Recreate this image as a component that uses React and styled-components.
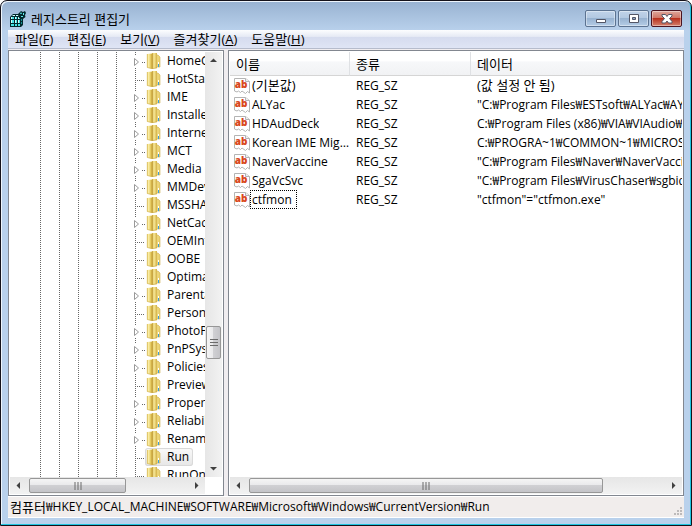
import React from "react";
import styled, { createGlobalStyle } from "styled-components";

const GlobalStyle = createGlobalStyle`
  * {
    box-sizing: border-box;
  }
  body {
    margin: 0;
    font-family: "Open Sans", "Noto Sans CJK KR", sans-serif;
    font-size: 12px;
    line-height: 18px;
    color: #000;
  }
`;

const Window = styled.div`
  height: 100vh;
  min-height: 240px;
  display: flex;
  flex-direction: column;
  padding: 0 7px;
  padding-bottom: 7px;
  border: 1px solid #15121a;
  border-radius: 7px 7px 0 0;
  background: linear-gradient(#98b2d1, #b9d1ec 30px);
  box-shadow: inset -1px -1px #1fc5e0, inset 1px 1px #eef5fc;
  overflow: hidden;
`;
const TitleBar = styled.header`
  flex: none;
  height: 29px;
  display: flex;
  align-items: flex-start;
  padding: 0 2px 0 1px;
`;
const TitleIcon = styled.svg`
  flex: none;
  width: 18px;
  height: 18px;
  margin-top: 9px;
`;
const Title = styled.h1`
  flex: 1;
  margin: 9px 0 0 4px;
  font-size: 13px;
  font-weight: 400;
  line-height: 18px;
`;
const WindowButtons = styled.div`
  display: flex;
  gap: 2px;
  margin-top: 9px;
`;
const WindowButton = styled.button`
  width: 31px;
  height: 17px;
  display: flex;
  align-items: center;
  justify-content: center;
  padding: 0;
  border: 1px solid ${(p) => (p.$danger ? "#4b1420" : "#5c7391")};
  border-radius: 2px;
  background: ${(p) =>
    p.$danger
      ? "linear-gradient(#dea79c, #cf7464 48%, #b8311e 50%, #d4806c)"
      : "linear-gradient(#c0d3e9, #b2c8e1 48%, #98b3d1 50%, #b4cce6)"};
  box-shadow: inset 0 0 0 1px rgba(255, 255, 255, 0.4);
`;

const MenuBar = styled.nav`
  flex: none;
  height: 19px;
  display: flex;
  gap: 14px;
  padding-left: 7px;
  background: linear-gradient(#fcfdfe, #e6eaf5 36%, #d5dbee 38%, #dfe5f5);
  border-bottom: 1px solid #b6bccc;
`;
const MenuItem = styled.button`
  padding: 0;
  border: 0;
  background: none;
  font: inherit;
  font-size: 13px;
  line-height: 19px;
  color: inherit;
`;

const Panes = styled.main`
  flex: 1;
  min-height: 0;
  display: grid;
  grid-template-columns: 216px minmax(0, 1fr);
  gap: 4px;
  padding-top: 1px;
  background: #f0edf0;
`;
const Pane = styled.section`
  min-width: 0;
  min-height: 0;
  display: flex;
  flex-direction: column;
  padding: 1px;
  border: 1px solid #828790;
  background: #fff;
`;
const PaneBody = styled.div`
  flex: 1;
  min-height: 0;
  display: flex;
  overflow: hidden;
`;

const Tree = styled.ul`
  flex: 1;
  min-width: 0;
  margin: 0;
  padding: 0;
  list-style: none;
  overflow: hidden;
`;
const TreeRow = styled.li`
  height: 18px;
  display: flex;
  align-items: center;
  padding-left: 30px;
  white-space: nowrap;
`;
const Guides = styled.svg`
  flex: none;
  width: 105px;
  height: 18px;
`;
const TreeLabel = styled.span`
  height: 18px;
  display: flex;
  align-items: center;
  gap: 5px;
  padding: 0 4px 0 1px;
  border-radius: 3px;
  background: ${(p) => (p.$selected ? "linear-gradient(#fafafa, #e6e6e6)" : "none")};
  box-shadow: ${(p) => (p.$selected ? "inset 0 0 0 1px #d9d9d9" : "none")};
`;
const SmallIcon = styled.svg`
  flex: none;
  width: 16px;
  height: 16px;
`;

const Scrollbar = styled.div`
  flex: none;
  display: flex;
  flex-direction: ${(p) => (p.$vertical ? "column" : "row")};
  ${(p) => (p.$vertical ? "width: 17px;" : "height: 17px;")}
  margin-right: ${(p) => p.$corner || 0}px;
  background: ${(p) =>
    p.$vertical
      ? "linear-gradient(90deg, #e6e6e6, #f2f2f2)"
      : "linear-gradient(#e6e6e6, #f2f2f2)"};
`;
const ArrowButton = styled.button`
  flex: none;
  width: 17px;
  height: 17px;
  display: flex;
  align-items: center;
  justify-content: center;
  padding: 0;
  border: 0;
  background: none;
`;
const Track = styled.div`
  flex: ${(p) => p.$grow} 0 0;
`;
const Thumb = styled.div`
  flex: ${(p) => p.$grow} 0 0;
  display: flex;
  align-items: center;
  justify-content: center;
  margin: 1px;
  border: 1px solid #979797;
  border-radius: 2px;
  background: linear-gradient(
    ${(p) => (p.$vertical ? "90deg" : "180deg")},
    #f5f5f5,
    #e9e9eb 48%,
    #d0d0d3 50%,
    #c4c4c8
  );
`;

const Values = styled.div`
  flex: 1;
  min-width: 0;
  overflow: hidden;
`;
const Table = styled.table`
  width: 100%;
  table-layout: fixed;
  border-collapse: separate;
  border-spacing: 0;
`;
const HeadCell = styled.th`
  width: ${(p) => p.$width};
  height: 24px;
  padding: 0 0 0 6px;
  border-right: 1px solid #dfe1e4;
  border-bottom: 1px solid #d5d5d5;
  background: linear-gradient(#fff 40%, #f7f8fa 42%, #f1f2f4);
  font-size: 13px;
  font-weight: 400;
  text-align: left;
  &:last-child {
    border-right: 0;
  }
`;
const Cell = styled.td`
  height: 19px;
  padding: 0 0 0 6px;
  font-size: ${(p) => (p.$korean ? 13 : 12)}px;
  line-height: 19px;
  white-space: nowrap;
  overflow: hidden;
`;
const NameCell = styled(Cell)`
  padding-left: 4px;
`;
const Name = styled.div`
  display: flex;
  align-items: center;
`;
const NameText = styled.span`
  min-width: 0;
  padding: 0 ${(p) => (p.$focused ? 5 : 0)}px 0 2px;
  outline: ${(p) => (p.$focused ? "1px dotted #000" : "none")};
  outline-offset: -1px;
  overflow: hidden;
  text-overflow: ellipsis;
`;

const StatusBar = styled.footer`
  flex: none;
  height: 22px;
  display: flex;
  align-items: center;
  padding-left: 2px;
  border-top: 1px solid #fff;
  border-bottom: 1px solid #fff;
  background: #f1edec;
  white-space: nowrap;
`;
const Computer = styled.span`
  font-size: 13px;
`;
const Grip = styled.svg`
  flex: none;
  align-self: flex-end;
  width: 11px;
  height: 11px;
  margin-left: auto;
`;

const menus = [
  ["파일", "F"],
  ["편집", "E"],
  ["보기", "V"],
  ["즐겨찾기", "A"],
  ["도움말", "H"],
];

const keys = [
  { name: "HomeGroup", children: true },
  { name: "HotStart" },
  { name: "IME", children: true },
  { name: "Installer", children: true },
  { name: "Internet", children: true },
  { name: "MCT", children: true },
  { name: "Media Center", children: true },
  { name: "MMDevices", children: true },
  { name: "MSSHA" },
  { name: "NetCache", children: true },
  { name: "OEMInfo" },
  { name: "OOBE" },
  { name: "Optimal" },
  { name: "Parental", children: true },
  { name: "Personal" },
  { name: "PhotoProp", children: true },
  { name: "PnPSysprep", children: true },
  { name: "Policies", children: true },
  { name: "Preview" },
  { name: "Property", children: true },
  { name: "Reliability", children: true },
  { name: "Rename", children: true },
  { name: "Run", selected: true },
  { name: "RunOnce" },
];

const values = [
  ["(기본값)", "(값 설정 안 됨)"],
  ["ALYac", '"C:₩Program Files₩ESTsoft₩ALYac₩AYLaunch.exe"'],
  ["HDAudDeck", "C:₩Program Files (x86)₩VIA₩VIAudio₩HDADeck"],
  ["Korean IME Migration", "C:₩PROGRA~1₩COMMON~1₩MICROS~1₩IME12"],
  ["NaverVaccine", '"C:₩Program Files₩Naver₩NaverVaccine₩Naver"'],
  ["SgaVcSvc", '"C:₩Program Files₩VirusChaser₩sgbider.exe"'],
  ["ctfmon", '"ctfmon"="ctfmon.exe"'],
];

const arrows = {
  up: "M1 6 4.500 2.500 8 6z",
  down: "M1 3 4.500 6.500 8 3z",
  left: "M6 1 2.500 4.500 6 8z",
  right: "M3 1 6.500 4.500 3 8z",
};

const RegistryIcon = () => (
  <TitleIcon viewBox="0 0 18 18" aria-hidden="true">
    <path d="M1 7 4 4h6l4 3v8l-2 2H1z" fill="#02282c" />
    <path d="M3 6l1-1h2v1zM7 6V5h2l1 1z" fill="#d4ffff" />
    <path
      d="M2 7h3v2H2zM6 7h2v2H6zM9 7h2v2H9zM2 10h3v3H2zM6 10h2v3H6zM9 10h2v3H9zM2 14h3v2H2zM6 14h2v2H6zM9 14h2v2H9z"
      fill="#48e4e6"
    />
    <path d="M2 7h1v2H2zM6 7h1v2H6zM9 7h1v2H9zM2 10h1v3H2zM6 10h1v3H6zM9 10h1v3H9z" fill="#d4ffff" />
    <path d="M12 9h1v2h-1zM12 12h1v2h-1z" fill="#159094" />
    <path d="m9 4 3-3 2 1 2-1 1 2-1 2 .5 2-2.500 2-4-1z" fill="#02282c" />
    <path d="m11 4 1-2 1 2zM14 3h1v2h-1zM12 6h2v1h-2z" fill="#5fe8e8" />
  </TitleIcon>
);

const FolderIcon = () => (
  <SmallIcon viewBox="0 0 16 16" aria-hidden="true">
    <defs>
      <linearGradient id="folder-front">
        <stop offset="0" stopColor="#f3e08c" />
        <stop offset="0.3" stopColor="#faeea6" />
        <stop offset="0.7" stopColor="#e3c659" />
        <stop offset="1" stopColor="#b8922e" />
      </linearGradient>
      <linearGradient id="folder-back">
        <stop offset="0" stopColor="#cfac43" />
        <stop offset="0.4" stopColor="#f8e998" />
        <stop offset="1" stopColor="#d2b047" />
      </linearGradient>
    </defs>
    <path d="M10 2h2l2 2v10h-4z" fill="#ecd476" stroke="#cfb050" strokeWidth="0.6" />
    <path d="M6 0h5v15l-5 1z" fill="url(#folder-back)" />
    <path d="M1 1l5.500-.5V16L1 14.500z" fill="url(#folder-front)" />
    <path d="M1.300 1v13.500l5 1.200 4.700-.9" fill="none" stroke="#c9a741" strokeWidth="0.6" />
    <path d="M12 11h1v3h-1z" fill="#3c9fdc" />
    <path d="M12 9h1v2h-1z" fill="#fff" />
  </SmallIcon>
);

const StringIcon = () => (
  <SmallIcon viewBox="0 0 16 16" aria-hidden="true">
    <path
      d="M.5.500h11l4 3v11.500l-2-1.500-2 2-3.500-2.500-1.500 1.500-2-1.500-1.500 1-2.500-1z"
      fill="#fff"
      stroke="#b4b4b4"
    />
    <path d="M11.500.500v3h4" fill="#eee" stroke="#b4b4b4" />
    <text x="7" y="10" textAnchor="middle" fontFamily="Open Sans" fontSize="10" fontWeight="800" fill="#d9481c">
      ab
    </text>
  </SmallIcon>
);

const TreeLines = ({ expandable }) => (
  <Guides viewBox="0 0 105 18" aria-hidden="true">
    <g stroke="#666" strokeDasharray="1 1" fill="none">
      {[0, 19, 38, 57, 76].map((x) => (
        <path key={x} d={`M${x + 0.5} 0v18`} />
      ))}
      {expandable ? (
        <path d="M95.500 0v3M95.500 16v2M98 10.500h7" strokeDashoffset="0" />
      ) : (
        <path d="M95.500 0v18M97 10.500h8" />
      )}
    </g>
    {expandable && (
      <>
        <path d="M93 5h9v9h-9z" fill="#fff" />
        <path d="M94.500 6.500v7l4-3.500z" fill="#fff" stroke="#999" />
      </>
    )}
  </Guides>
);

const Arrow = ({ dir }) => (
  <ArrowButton type="button" aria-label={dir}>
    <svg width="9" height="9" viewBox="0 0 9 9">
      <path d={arrows[dir]} fill="#404040" />
    </svg>
  </ArrowButton>
);

const ScrollArea = ({ vertical, before, size, after, corner }) => (
  <Scrollbar $vertical={vertical} $corner={corner}>
    <Arrow dir={vertical ? "up" : "left"} />
    <Track $grow={before} />
    <Thumb $vertical={vertical} $grow={size}>
      <svg width="8" height="8" viewBox="0 0 8 8">
        <path
          d={vertical ? "M0 .5h8M0 3.500h8M0 6.500h8" : "M1 0v8M4 0v8M7 0v8"}
          stroke="#6b6b6b"
        />
      </svg>
    </Thumb>
    <Track $grow={after} />
    <Arrow dir={vertical ? "down" : "right"} />
  </Scrollbar>
);

const App = () => {
  return (
    <Window>
      <GlobalStyle />
      <TitleBar>
        <RegistryIcon />
        <Title>레지스트리 편집기</Title>
        <WindowButtons>
          <WindowButton type="button" aria-label="최소화">
            <svg width="12" height="12" viewBox="0 0 12 12">
              <path d="M1.500 6.500h9v3h-9z" fill="#fff" stroke="#535666" />
            </svg>
          </WindowButton>
          <WindowButton type="button" aria-label="최대화">
            <svg width="12" height="12" viewBox="0 0 12 12">
              <path d="M1.500 1.500h9v8h-9z" fill="#fff" stroke="#535666" />
              <path d="M4.500 4.500h3v2h-3z" fill="#8da5c5" stroke="#535666" />
            </svg>
          </WindowButton>
          <WindowButton type="button" aria-label="닫기" $danger>
            <svg width="12" height="12" viewBox="0 0 12 12">
              <path
                d="M1 1.500h3.500L6 3.500l1.500-2H11v1.500L8.500 5.500 11 8.500V10H7.500L6 8l-1.500 2H1V8.500l2.500-3L1 3z"
                fill="#fff"
                stroke="#535666"
              />
            </svg>
          </WindowButton>
        </WindowButtons>
      </TitleBar>
      <MenuBar>
        {menus.map(([label, key]) => (
          <MenuItem type="button" key={key}>
            {label}(<u>{key}</u>)
          </MenuItem>
        ))}
      </MenuBar>
      <Panes>
        <Pane>
          <PaneBody>
            <Tree>
              {keys.map((item) => (
                <TreeRow key={item.name}>
                  <TreeLines expandable={item.children} />
                  <TreeLabel $selected={item.selected}>
                    <FolderIcon />
                    {item.name}
                  </TreeLabel>
                </TreeRow>
              ))}
            </Tree>
            <ScrollArea vertical before={259} size={32} after={101} />
          </PaneBody>
          <ScrollArea before={1} size={97} after={62} corner={17} />
        </Pane>
        <Pane>
          <PaneBody>
            <Values>
              <Table>
                <thead>
                  <tr>
                    <HeadCell $width="120px">이름</HeadCell>
                    <HeadCell $width="121px">종류</HeadCell>
                    <HeadCell>데이터</HeadCell>
                  </tr>
                </thead>
                <tbody>
                  {values.map(([name, data], i) => (
                    <tr key={name}>
                      <NameCell $korean={i === 0}>
                        <Name>
                          <StringIcon />
                          <NameText $focused={name === "ctfmon"}>{name}</NameText>
                        </Name>
                      </NameCell>
                      <Cell>REG_SZ</Cell>
                      <Cell $korean={i === 0}>{data}</Cell>
                    </tr>
                  ))}
                </tbody>
              </Table>
            </Values>
          </PaneBody>
          <ScrollArea before={1} size={356} after={62} />
        </Pane>
      </Panes>
      <StatusBar>
        <Computer>컴퓨터</Computer>
        ₩HKEY_LOCAL_MACHINE₩SOFTWARE₩Microsoft₩Windows₩CurrentVersion₩Run
        <Grip viewBox="0 0 11 11" aria-hidden="true">
          <path d="M7 1h2v2H7zM4 4h2v2H4zM7 4h2v2H7zM1 7h2v2H1zM4 7h2v2H4zM7 7h2v2H7z" fill="#bdbaba" />
        </Grip>
      </StatusBar>
    </Window>
  );
};

export default App;
